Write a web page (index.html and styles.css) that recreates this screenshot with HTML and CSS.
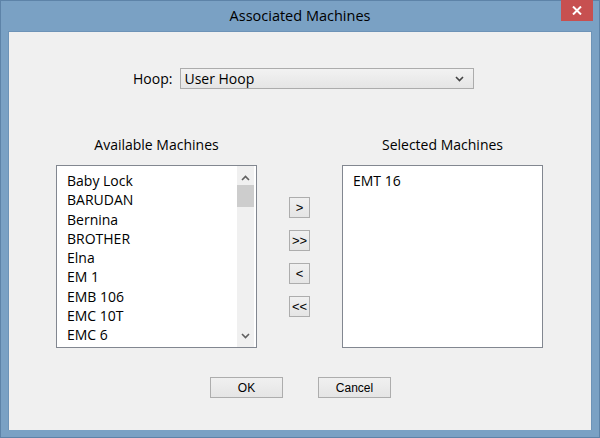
FILE: index.html
```html
<!DOCTYPE html>
<html lang="en">
<head>
  <meta charset="UTF-8">
  <title>Associated Machines</title>
  <link rel="stylesheet" href="styles.css">
</head>
<body>
  <div class="window">
    <div class="titlebar">
      <span class="title">Associated Machines</span>
      <button class="close-btn">
        <svg width="10" height="9" viewBox="0 0 10 9"><path d="M1 0.5 L9 8.5 M9 0.5 L1 8.5" stroke="#fff" stroke-width="2"/></svg>
      </button>
    </div>
    <div class="client">
      <div class="hoop-row">
        <label for="hoop">Hoop:</label>
        <div class="combo">
          <span>User Hoop</span>
          <svg width="9" height="6" viewBox="0 0 9 6"><path d="M1 1 L4.5 4.5 L8 1" fill="none" stroke="#444" stroke-width="1.6"/></svg>
        </div>
      </div>

      <div class="lists">
        <div class="list-col">
          <div class="list-title">Available Machines</div>
          <div class="listbox">
            <ul class="items">
              <li>Baby Lock</li>
              <li>BARUDAN</li>
              <li>Bernina</li>
              <li>BROTHER</li>
              <li>Elna</li>
              <li>EM 1</li>
              <li>EMB 106</li>
              <li>EMC 10T</li>
              <li>EMC 6</li>
            </ul>
            <div class="scrollbar">
              <svg class="arrow" width="9" height="6" viewBox="0 0 9 6"><path d="M1 5 L4.5 1.5 L8 5" fill="none" stroke="#606060" stroke-width="1.6"/></svg>
              <div class="track"><div class="thumb"></div></div>
              <svg class="arrow" width="9" height="6" viewBox="0 0 9 6"><path d="M1 1 L4.5 4.5 L8 1" fill="none" stroke="#606060" stroke-width="1.6"/></svg>
            </div>
          </div>
        </div>

        <div class="move-btns">
          <button class="btn small">&gt;</button>
          <button class="btn small">&gt;&gt;</button>
          <button class="btn small">&lt;</button>
          <button class="btn small">&lt;&lt;</button>
        </div>

        <div class="list-col">
          <div class="list-title">Selected Machines</div>
          <div class="listbox">
            <ul class="items">
              <li>EMT 16</li>
            </ul>
          </div>
        </div>
      </div>

      <div class="actions">
        <button class="btn wide">OK</button>
        <button class="btn wide">Cancel</button>
      </div>
    </div>
  </div>
</body>
</html>
```

FILE: styles.css
```css
body {
  margin: 0;
  font-family: 'Open Sans', 'Noto Sans', sans-serif;
  color: #000;
}

.window {
  width: 600px;
  height: 438px;
  box-sizing: border-box;
  background: #7aa1c4;
  border: 1px solid #5d83a8;
  padding: 0 7px 7px;
  display: flex;
  flex-direction: column;
  position: relative;
}

.titlebar {
  height: 30px;
  display: flex;
  align-items: center;
  justify-content: center;
}

.title {
  font-size: 14.5px;
  color: #000;
  margin-top: -1px;
}

.close-btn {
  position: absolute;
  top: -1px;
  right: 6px;
  width: 32px;
  height: 21px;
  background: #c75050;
  border: none;
  padding: 0;
  display: flex;
  align-items: center;
  justify-content: center;
}

.client {
  flex: 1;
  background: #f0f0f0;
  border: 1px solid #6d93b7;
  border-bottom: none;
  font-size: 14px;
}

.hoop-row {
  display: flex;
  align-items: center;
  gap: 8px;
  margin: 36px 0 0 124px;
}

.combo {
  width: 280px;
  height: 19px;
  border: 1px solid #acacac;
  background: linear-gradient(#f2f2f2, #e5e5e5);
  display: flex;
  align-items: center;
  justify-content: space-between;
  padding: 0 9px 0 3px;
}

.lists {
  display: flex;
  gap: 32px;
  margin: 46px 0 0 47px;
}

.list-col {
  display: flex;
  flex-direction: column;
  align-items: center;
}

.list-title {
  line-height: 20px;
  margin-bottom: 10px;
}

.listbox {
  width: 199px;
  height: 181px;
  background: #fff;
  border: 1px solid #828790;
  display: flex;
}

.items {
  list-style: none;
  margin: 0;
  padding: 5px 0 0 10px;
  flex: 1;
}

.items li {
  height: 19.3px;
  line-height: 19px;
}

.scrollbar {
  width: 17px;
  background: #f0f0f0;
  margin: 0 2px 0 0;
  display: flex;
  flex-direction: column;
  align-items: center;
}

.scrollbar .arrow {
  margin: 9px 0 5px;
}

.scrollbar .arrow:last-child {
  margin: 5px 0 8px;
}

.track {
  flex: 1;
  width: 100%;
}

.thumb {
  height: 22px;
  background: #cdcdcd;
  margin-top: -1px;
}

.move-btns {
  display: flex;
  flex-direction: column;
  gap: 12px;
  padding-top: 62px;
}

.btn {
  font-family: 'Liberation Sans', Arial, sans-serif;
  font-size: 12px;
  color: #000;
  background: linear-gradient(#f0f0f0, #e5e5e5);
  border: 1px solid #adadad;
  padding: 0;
  box-sizing: border-box;
}

.btn.small {
  width: 21px;
  height: 21px;
  font-size: 13px;
}

.btn.wide {
  width: 73px;
  height: 21px;
}

.actions {
  display: flex;
  justify-content: center;
  gap: 35px;
  margin-top: 29px;
  padding-left: 1px;
}
```
